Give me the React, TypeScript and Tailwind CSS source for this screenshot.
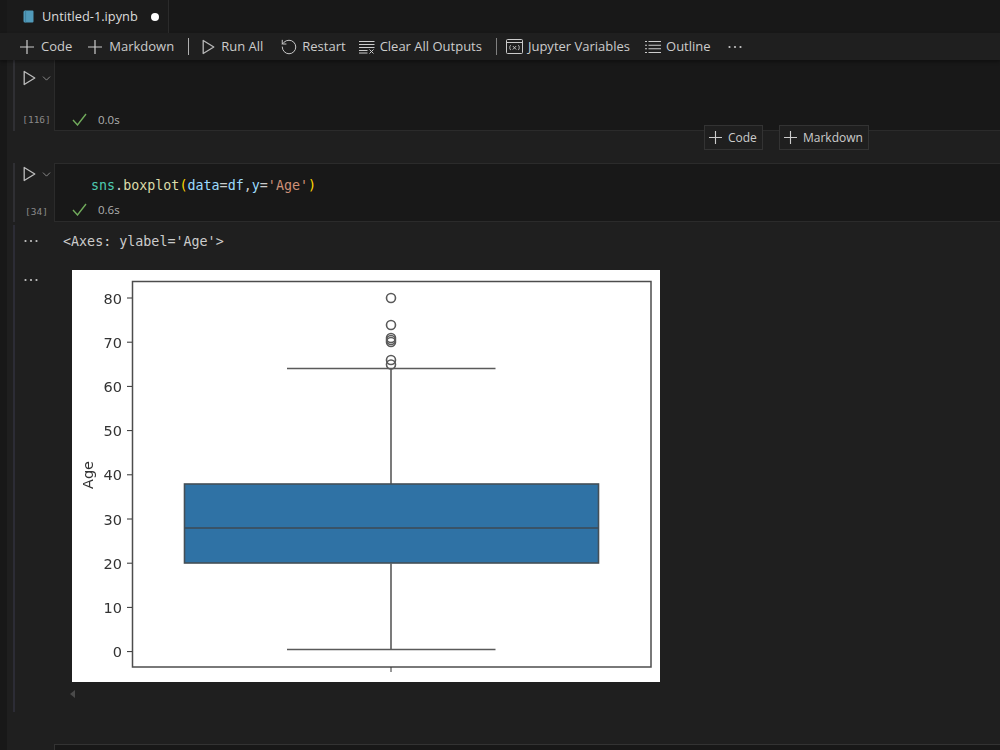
import React from 'react';
import { ChevronDown, RotateCcw } from 'lucide-react';

const ticks = [
  { label: '80', y: 28 },
  { label: '70', y: 72.2 },
  { label: '60', y: 116.4 },
  { label: '50', y: 160.6 },
  { label: '40', y: 204.8 },
  { label: '30', y: 249 },
  { label: '20', y: 293.2 },
  { label: '10', y: 337.4 },
  { label: '0', y: 381.6 },
];

const outliers = [28, 55, 68, 70, 72, 90, 94.5];

function NotebookIcon() {
  return (
    <svg width="11" height="13" viewBox="0 0 11 13" className="shrink-0">
      <path d="M2 0.5h7.5a1 1 0 0 1 1 1v10a1 1 0 0 1-1 1H2A1.5 1.5 0 0 1 .5 11V2A1.5 1.5 0 0 1 2 .5z" fill="#519aba" />
      <path d="M2.6 0.5v12" stroke="#3b7c97" strokeWidth="0.8" />
    </svg>
  );
}

function PlusIcon({ size }: { size: number }) {
  return (
    <svg width={size} height={size} viewBox="0 0 14 14" fill="none" stroke="#cccccc" strokeWidth="1.2" className="shrink-0">
      <path d="M0 7h14M7 0v14" />
    </svg>
  );
}

function PlayIcon({ className }: { className: string }) {
  return (
    <svg width="13" height="16" viewBox="0 0 13 16" fill="none" stroke="currentColor" strokeWidth="1.3" className={`shrink-0 ${className}`}>
      <path d="M1.2 1.5L11.8 8L1.2 14.5Z" strokeLinejoin="round" />
    </svg>
  );
}

function CheckIcon({ className }: { className?: string }) {
  return (
    <svg width="15" height="13" viewBox="0 0 15 13" fill="none" stroke="#71ab5c" strokeWidth="1.4" className={`shrink-0 ${className ?? ''}`}>
      <path d="M1 7l4.5 5L14 1" />
    </svg>
  );
}

function DotsIcon() {
  return (
    <svg width="14" height="4" viewBox="0 0 14 4" fill="#c4c4c4" className="shrink-0">
      <circle cx="1.5" cy="2" r="1.1" />
      <circle cx="7" cy="2" r="1.1" />
      <circle cx="12.5" cy="2" r="1.1" />
    </svg>
  );
}

function ClearIcon() {
  return (
    <svg width="16" height="14" viewBox="0 0 16 14" fill="none" stroke="#cccccc" strokeWidth="1" className="shrink-0">
      <path d="M0 1.5h15.5M0 4.5h15.5M0 7.5h15.5M0 10.5h8.5M0 13h8.5" />
      <path d="M10.5 9.5l4 4M14.5 9.5l-4 4" />
    </svg>
  );
}

function VariablesIcon() {
  return (
    <svg width="17" height="15" viewBox="0 0 17 15" fill="none" stroke="#cccccc" strokeWidth="1" className="shrink-0">
      <rect x="0.5" y="0.5" width="16" height="14" rx="1" />
      <path d="M0.5 3.5h16" />
      <path d="M5 6.5c-1.2 0-1.2 .7-1.2 2s0 2.200 1.200 2.200M12 6.500c1.200 0 1.200 .700 1.200 2s0 2.200-1.200 2.200M6.800 7l3.400 3.500M10.200 7l-3.400 3.500" strokeWidth="0.9" />
    </svg>
  );
}

function OutlineIcon() {
  return (
    <svg width="16" height="14" viewBox="0 0 16 14" fill="none" stroke="#cccccc" strokeWidth="1.1" className="shrink-0">
      <path d="M0 1.500h2M0 5.200h2M0 8.800h2M0 12.500h2M3.500 1.500h12.500M3.500 5.200h12.500M3.500 8.800h12.500M3.500 12.500h12.500" />
    </svg>
  );
}

function ToolItem({ icon, label, className }: { icon: React.ReactNode; label: string; className: string }) {
  return (
    <div className={`flex items-center ${className}`}>
      {icon}
      <span className="whitespace-nowrap pt-[1px]">{label}</span>
    </div>
  );
}

function Toolbar() {
  return (
    <div className="relative z-10 -ml-[7px] flex h-[27px] items-center bg-[#1f1f1f] pl-[20px] text-[13px] text-[#cccccc] shadow-[0_2px_3px_rgba(0,0,0,0.35)]">
      <ToolItem className="gap-[7px]" icon={<PlusIcon size={14} />} label="Code" />
      <ToolItem className="ml-[16px] gap-[7px]" icon={<PlusIcon size={14} />} label="Markdown" />
      <div className="ml-[14px] h-[17px] w-px bg-[#b0b0b0]" />
      <ToolItem className="ml-[13px] gap-[6px]" icon={<PlayIcon className="text-[#b8b8b8]" />} label="Run All" />
      <ToolItem className="ml-[17px] gap-[4px]" icon={<RotateCcw size={18} strokeWidth={1.3} className="shrink-0" />} label="Restart" />
      <ToolItem className="ml-[13px] gap-[5px]" icon={<ClearIcon />} label="Clear All Outputs" />
      <div className="ml-[14px] h-[17px] w-px bg-[#808080]" />
      <ToolItem className="ml-[9px] gap-[5px]" icon={<VariablesIcon />} label="Jupyter Variables" />
      <ToolItem className="ml-[15px] gap-[5px]" icon={<OutlineIcon />} label="Outline" />
      <div className="ml-[17px]">
        <DotsIcon />
      </div>
    </div>
  );
}

function CellGutter({ count, topClass, countClass }: { count: string; topClass: string; countClass: string }) {
  return (
    <div className="flex w-[47px] shrink-0 pl-[6px]">
      <div className="flex flex-1 flex-col justify-between border-l-2 border-[#2f2f33]">
        <div className={`flex items-center pl-[8px] text-[#bdbdbd] ${topClass}`}>
          <PlayIcon className="" />
          <ChevronDown size={13} strokeWidth={1.4} className="ml-[4px] shrink-0 text-[#a8a8a8]" />
        </div>
        <div className={`pl-[4px] text-center font-['DejaVu_Sans_Mono',monospace] text-[9.5px] leading-[12px] text-[#8a8a8a] ${countClass}`}>
          {count}
        </div>
      </div>
    </div>
  );
}

function AddCellButton({ label, className }: { label: string; className: string }) {
  return (
    <div className={`flex h-[25px] items-center gap-[6px] border border-[#333333] bg-[#1f1f1f] pl-[4px] text-[12px] text-[#cccccc] ${className}`}>
      <PlusIcon size={13} />
      <span>{label}</span>
    </div>
  );
}

function BoxPlot() {
  return (
    <svg width="588" height="412" viewBox="0 0 588 412" className="block blur-[0.4px]">
      <rect width="588" height="412" fill="#ffffff" />
      <rect x="60.5" y="11.5" width="518.5" height="385.5" fill="none" stroke="#4d4d4d" strokeWidth="1.5" />
      {ticks.map((t) => (
        <g key={t.label}>
          <path d={`M55 ${t.y}h5`} stroke="#333333" strokeWidth="1" />
          <text x="50" y={t.y + 5.5} textAnchor="end" fontFamily="DejaVu Sans, sans-serif" fontSize="14.5" fill="#333333">
            {t.label}
          </text>
        </g>
      ))}
      <text
        transform="translate(21 205) rotate(-90)"
        textAnchor="middle"
        fontFamily="DejaVu Sans, sans-serif"
        fontSize="14.5"
        fill="#333333"
      >
        Age
      </text>
      <path d="M319 397v5" stroke="#333333" strokeWidth="1" />
      <path d="M319 98.5V214M319 293.5V379.5M215 98.5H423.5M215 379.5H423.5" fill="none" stroke="#5a5a5a" strokeWidth="1.6" />
      <rect x="112.5" y="214" width="414" height="79" fill="#2f72a5" stroke="#444f57" strokeWidth="1.6" />
      <path d="M112.5 258H526.5" stroke="#3e4a54" strokeWidth="1.6" />
      {outliers.map((y) => (
        <circle key={y} cx="319" cy={y} r="4.5" fill="none" stroke="#5a5a5a" strokeWidth="1.6" />
      ))}
    </svg>
  );
}

export default function App() {
  return (
    <div className="flex h-[750px] w-[1000px] overflow-hidden bg-[#181818] font-['Open_Sans',sans-serif]">
      <div className="w-[7px] shrink-0" />
      <div className="relative flex min-w-0 flex-1 flex-col">
        {/* tab strip */}
        <div className="flex h-[33px]">
          <div className="flex w-[162px] items-center border-r border-[#2b2b2b] bg-[#1b1b1b] pl-[16px]">
            <NotebookIcon />
            <span className="ml-[8px] text-[12.8px] text-[#dcdcdc]">Untitled-1.ipynb</span>
            <div className="ml-[13px] h-[8px] w-[8px] rounded-full bg-white" />
          </div>
        </div>
        <Toolbar />

        <div className="flex flex-1 flex-col bg-[#1f1f1f]">
          {/* previous cell */}
          <div className="flex h-[71px]">
            <CellGutter count="[116]" topClass="pt-[10px]" countClass="pb-[5px]" />
            <div className="flex flex-1 items-end border-b border-l border-[#2b2b2b] bg-[#181818] pb-[2px]">
              <div className="flex h-[17px] items-center">
                <CheckIcon className="ml-[17px]" />
                <span className="ml-[11px] text-[11.5px] text-[#b0b0b0]">0.0s</span>
              </div>
            </div>
          </div>

          {/* gap with add cell buttons */}
          <div className="relative h-[32px]">
            <div className="absolute left-[697px] top-[-6px] flex gap-[16px]">
              <AddCellButton label="Code" className="w-[59px]" />
              <AddCellButton label="Markdown" className="w-[90px]" />
            </div>
          </div>

          {/* boxplot cell */}
          <div className="flex h-[59px]">
            <CellGutter count="[34]" topClass="pt-[3px]" countClass="pb-[4px]" />
            <div className="flex flex-1 flex-col border-y border-l border-[#2b2b2b] bg-[#181818]">
              <div className="pl-[36px] pt-[13px] font-['DejaVu_Sans_Mono',monospace] text-[13.35px] leading-[18px]">
                <span className="text-[#4ec9b0]">sns</span>
                <span className="text-[#cccccc]">.</span>
                <span className="text-[#dcdcaa]">boxplot</span>
                <span className="text-[#ffd700]">(</span>
                <span className="text-[#9cdcfe]">data</span>
                <span className="text-[#cccccc]">=</span>
                <span className="text-[#9cdcfe]">df</span>
                <span className="text-[#cccccc]">,</span>
                <span className="text-[#9cdcfe]">y</span>
                <span className="text-[#cccccc]">=</span>
                <span className="text-[#ce9178]">'Age'</span>
                <span className="text-[#ffd700]">)</span>
              </div>
              <div className="mt-[6px] flex h-[17px] items-center">
                <CheckIcon className="ml-[17px]" />
                <span className="ml-[11px] text-[11.5px] text-[#b0b0b0]">0.6s</span>
              </div>
            </div>
          </div>

          {/* output */}
          <div className="flex h-[522px]">
            <div className="w-[65px] shrink-0 pl-[6px] pt-[3px]">
              <div className="flex h-[487px] flex-col gap-[35px] border-l-2 border-[#2c2c35] pl-[9px] pt-[14px]">
                <DotsIcon />
                <DotsIcon />
              </div>
            </div>
            <div className="flex flex-col">
              <div className="-ml-[9px] h-[48px] pt-[11px] font-['DejaVu_Sans_Mono',monospace] text-[13.35px] leading-[18px] text-[#cccccc]">
                {"<Axes: ylabel='Age'>"}
              </div>
              <BoxPlot />
              <div className="-ml-[2px] mt-[8px] h-0 w-0 border-y-[4px] border-r-[5px] border-y-transparent border-r-[#4a4a4a]" />
            </div>
          </div>

          {/* next cell, cut off by the window */}
          <div className="ml-[47px] flex-1 border-l border-t border-[#333333] bg-[#181818]" />
        </div>
      </div>
    </div>
  );
}
